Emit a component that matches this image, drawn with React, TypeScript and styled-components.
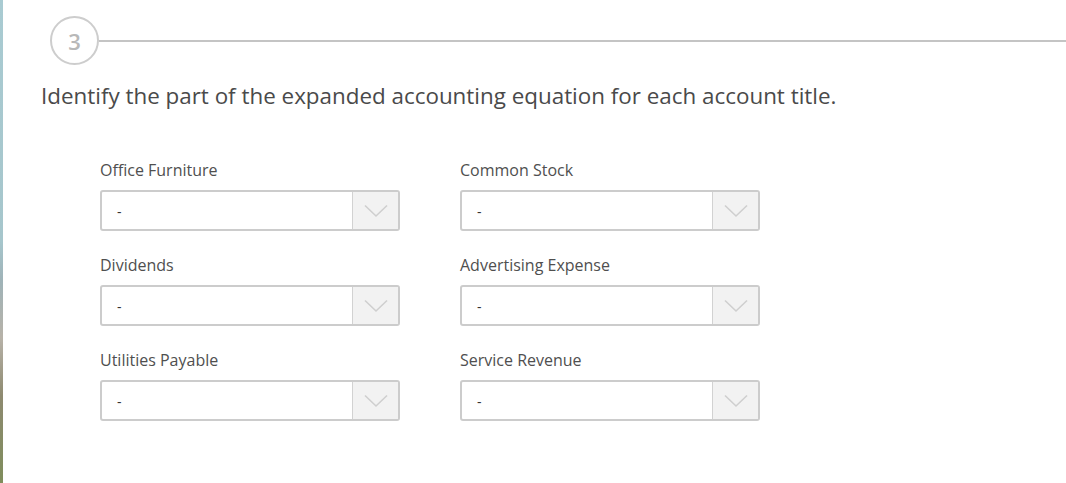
import React from 'react';
import styled, { createGlobalStyle } from 'styled-components';

const GlobalStyle = createGlobalStyle`
  html, body {
    margin: 0;
    padding: 0;
    background: #fff;
    font-family: "Open Sans", "Noto Sans", sans-serif;
  }
`;

const Page = styled.div`
  display: flex;
  width: 1066px;
  height: 483px;
  overflow: hidden;
`;

const EdgeStrip = styled.div`
  width: 3px;
  flex-shrink: 0;
  background: linear-gradient(
    to bottom,
    #a9cbd2 0%,
    #a6c6cc 50%,
    #9fb3b8 58%,
    #b7b2a8 70%,
    #8e8a70 82%,
    #7f8d5c 100%
  );
`;

const Content = styled.div`
  flex: 1;
  padding-left: 38px;
  padding-top: 16px;
`;

const StepHeader = styled.div`
  display: flex;
  align-items: center;
  margin-left: 9px;
`;

const StepCircle = styled.div`
  width: 45px;
  height: 45px;
  border: 2px solid #cdcdcd;
  border-radius: 50%;
  display: flex;
  align-items: center;
  justify-content: center;
  color: #b8b8b8;
  font-size: 22px;
  font-weight: 600;
  flex-shrink: 0;
`;

const StepLine = styled.div`
  flex: 1;
  height: 2px;
  background: #c4c4c4;
`;

const Prompt = styled.h2`
  margin: 16px 0 0 0;
  font-size: 22.4px;
  font-weight: 400;
  color: #4a4a4a;
  line-height: 30px;
`;

const FieldGrid = styled.div`
  display: grid;
  grid-template-columns: 300px 300px;
  column-gap: 60px;
  row-gap: 23px;
  margin: 48px 0 0 59px;
`;

const Field = styled.div`
  display: flex;
  flex-direction: column;
`;

const Label = styled.label`
  font-size: 16px;
  color: #4f4f4f;
  line-height: 22px;
  margin-bottom: 9px;
`;

const Select = styled.div`
  display: flex;
  height: 41px;
  box-sizing: border-box;
  border: 2px solid #cccccc;
  border-radius: 3px;
  overflow: hidden;
  background: #fff;
`;

const Value = styled.div`
  flex: 1;
  display: flex;
  align-items: center;
  padding-left: 15px;
  padding-top: 1px;
  font-size: 14px;
  color: #333;
`;

const ArrowBox = styled.div`
  width: 45px;
  flex-shrink: 0;
  border-left: 1px solid #d2d2d2;
  background: #f2f2f2;
  display: flex;
  align-items: center;
  justify-content: center;
`;

const Chevron = () => (
  <svg width="24" height="14" viewBox="0 0 24 14">
    <path d="M1 1.5 L12 12 L23 1.5" fill="none" stroke="#cfcfcf" strokeWidth="1.6" />
  </svg>
);

const fields = [
  'Office Furniture',
  'Common Stock',
  'Dividends',
  'Advertising Expense',
  'Utilities Payable',
  'Service Revenue',
];

export default function App() {
  return (
    <Page>
      <GlobalStyle />
      <EdgeStrip />
      <Content>
        <StepHeader>
          <StepCircle>3</StepCircle>
          <StepLine />
        </StepHeader>
        <Prompt>Identify the part of the expanded accounting equation for each account title.</Prompt>
        <FieldGrid>
          {fields.map((f) => (
            <Field key={f}>
              <Label>{f}</Label>
              <Select>
                <Value>-</Value>
                <ArrowBox>
                  <Chevron />
                </ArrowBox>
              </Select>
            </Field>
          ))}
        </FieldGrid>
      </Content>
    </Page>
  );
}
